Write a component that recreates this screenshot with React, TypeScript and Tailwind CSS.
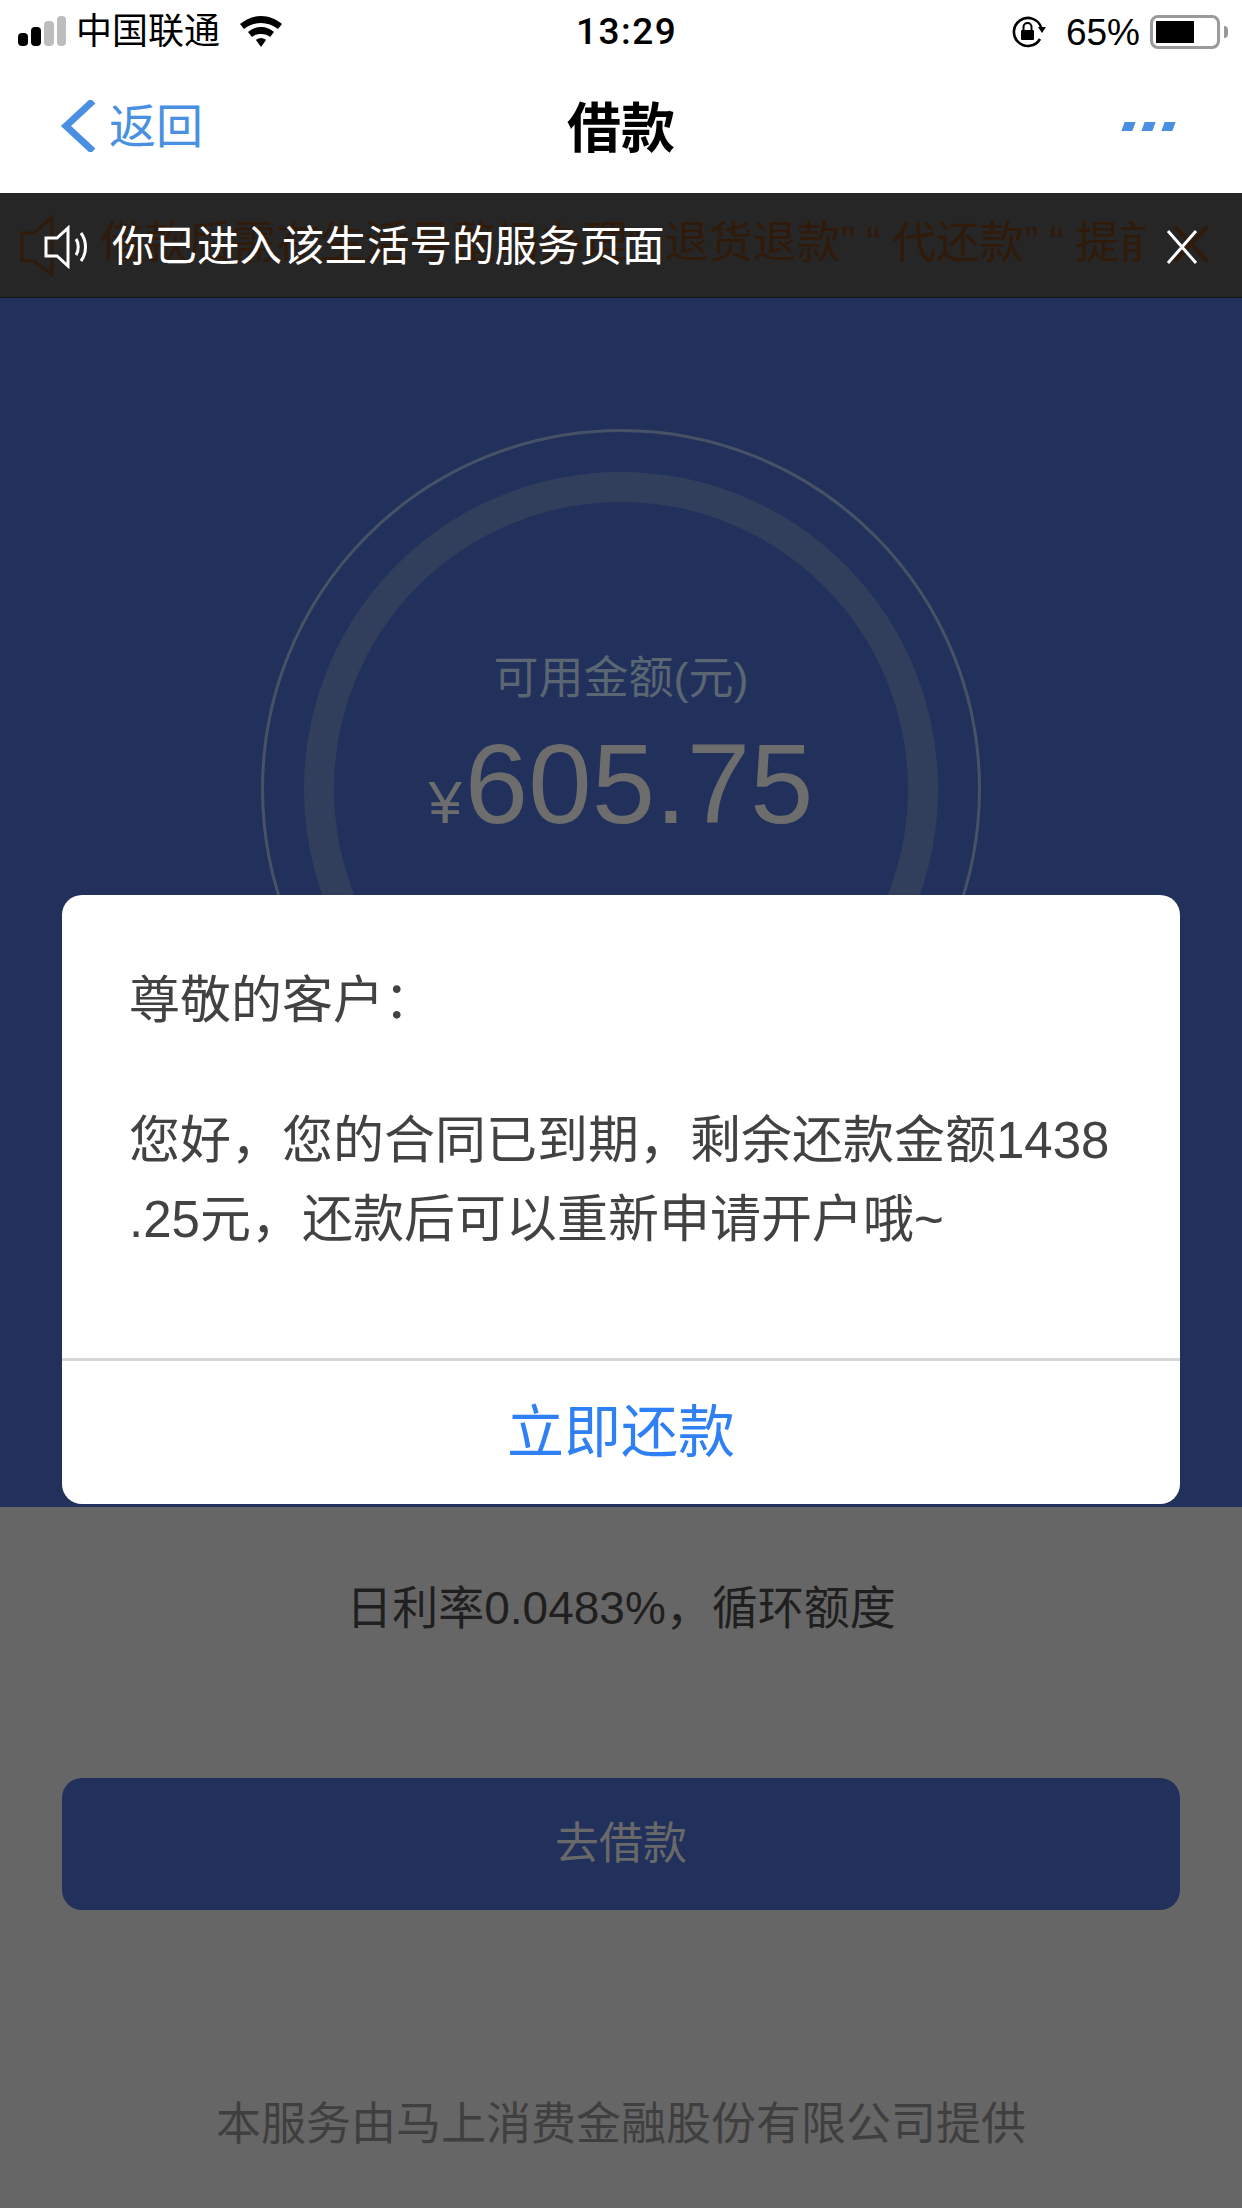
export default function App() {
  return (
    <div className="relative w-[1242px] h-[2208px] overflow-hidden bg-[#666666] font-['Liberation_Sans','Noto_Sans_CJK_SC',sans-serif]">
      <div className="bg-white h-[193px]">
        <div className="h-[64px] flex items-center justify-between pl-[18px] pr-[14px] text-black">
          <div className="flex items-center">
            <svg width="48" height="32" viewBox="0 0 48 32" fill="#000">
              <rect x="0" y="17" width="10" height="13" rx="4" />
              <rect x="13" y="11" width="10" height="19" rx="4" />
              <rect x="26" y="5" width="10" height="25" rx="4" fill="#bdbdbd" />
              <rect x="39" y="0" width="9" height="30" rx="4" fill="#bdbdbd" />
            </svg>
            <span className="ml-[10px] text-[36px] leading-none">中国联通</span>
            <svg className="ml-[20px]" width="42" height="32" viewBox="0 0 42 32" fill="#000">
              <path d="M21 0C13 0 6 3 0 8l4 5c5-4 11-6 17-6s12 2 17 6l4-5C36 3 29 0 21 0Z" />
              <path d="M21 11c-5 0-10 2-13 5l4 5c2-2 5-3 9-3s7 1 9 3l4-5c-3-3-8-5-13-5Z" />
              <path d="M21 22c-2 0-4 1-5 2l5 7 5-7c-1-1-3-2-5-2Z" />
            </svg>
          </div>
          <span className="absolute left-[576px] top-[11px] font-['Roboto',sans-serif] text-[37px] leading-[42px] font-medium tracking-[1.5px]">13:29</span>
          <div className="flex items-center">
            <svg width="34" height="32" viewBox="0 0 34 32" fill="none">
              <path d="M28 23A14 14 0 1 1 29 11" stroke="#000" strokeWidth="2.6" />
              <path d="M26 11h8l-4 6Z" fill="#000" />
              <rect x="9" y="14" width="13" height="10" rx="1" fill="#000" />
              <path d="M11.5 14v-3a4 4 0 0 1 8 0v3" stroke="#000" strokeWidth="2" />
            </svg>
            <span className="ml-[20px] text-[37px] leading-none">65%</span>
            <div className="ml-[10px] w-[70px] h-[34px] rounded-[8px] border-[3px] border-[#9a9a9a] p-[3px]">
              <div className="w-[38px] h-[22px] bg-black" />
            </div>
            <div className="ml-[4px] w-[4px] h-[12px] rounded-r-full bg-[#9a9a9a]" />
          </div>
        </div>
        <div className="h-[129px] relative flex items-center justify-center">
          <div className="absolute left-[60px] top-[36px] flex items-center">
            <svg width="36" height="52" viewBox="0 0 36 52" fill="none">
              <path d="M33 1 L6 26 L33 51" stroke="#4a90e2" strokeWidth="7" />
            </svg>
            <span className="ml-[13px] text-[47px] leading-none text-[#4a90e2]">返回</span>
          </div>
          <span className="text-[54px] leading-none font-semibold text-black">借款</span>
          <div className="absolute left-[1123px] top-[58px] flex gap-[9px]">
            <div className="w-[11px] h-[9px] bg-[#4a90e2] [transform:skewX(-20deg)]" />
            <div className="w-[11px] h-[9px] bg-[#4a90e2] [transform:skewX(-20deg)]" />
            <div className="w-[11px] h-[9px] bg-[#4a90e2] [transform:skewX(-20deg)]" />
          </div>
        </div>
      </div>

      <div className="relative h-[105px] bg-[#262626] border-b border-[#161616] flex items-center overflow-hidden">
        <div className="absolute left-[100px] top-[28px] w-[1045px] overflow-hidden">
          <span className="text-[44px] leading-none whitespace-nowrap text-[#301a0a]">借款后需在生活号整场办理<span className="tracking-[22px]">“</span>退货退款<span className="tracking-[11px]">”“</span>代还款<span className="tracking-[11px]">”“</span>提前还款”</span>
        </div>
        <svg className="absolute left-[20px] top-[22px]" width="42" height="62" viewBox="0 0 42 62" fill="none" stroke="#301a0a" strokeWidth="3">
          <path d="M32 2v58L14 46H2V18h12Z" />
        </svg>
        <svg className="absolute left-[1172px] top-[32px]" width="38" height="38" viewBox="0 0 38 38" stroke="#301a0a" strokeWidth="4">
          <path d="M3 2l32 34M35 2L3 36" />
        </svg>
        <svg className="relative ml-[44px] mt-[4px]" width="50" height="44" viewBox="0 0 50 44" fill="none" stroke="#fff" strokeWidth="3">
          <path d="M24 3v38L13 31H2V13h11Z" />
          <path d="M32 14c3 4 3 12 0 16" />
          <path d="M37 8c6 8 6 20 0 28" />
        </svg>
        <span className="relative ml-[18px] mt-[5px] text-[42.5px] leading-none text-white">你已进入该生活号的服务页面</span>
        <svg className="absolute left-[1166px] top-[36px]" width="32" height="36" viewBox="0 0 32 36" stroke="#fff" strokeWidth="3">
          <path d="M2 2l28 32M30 2L2 34" />
        </svg>
      </div>

      <div className="h-[1209px] bg-[#22315c] overflow-hidden pt-[131px]">
        <div className="mx-auto w-[720px] h-[720px] rounded-full border-[3px] border-[#485266] flex items-center justify-center">
          <div className="w-[634px] h-[634px] rounded-full border-[30px] border-[#323f5c] flex flex-col items-center">
            <span className="mt-[152px] text-[45px] leading-[50px] text-[#5a6672] whitespace-nowrap">可用金额(元)</span>
            <div className="mt-[23px] flex items-baseline text-[#6d6d6d] whitespace-nowrap">
              <span className="text-[60px] leading-none mr-[3px]">¥</span>
              <span className="text-[114px] leading-[114px]">605.75</span>
            </div>
          </div>
        </div>
      </div>

      <div className="flex flex-col items-center">
        <p className="mt-[76px] text-[46px] leading-[50px] text-[#1f1f1f]">日利率0.0483%，循环额度</p>
        <div className="mt-[145px] w-[1118px] h-[132px] rounded-[20px] bg-[#22315c] flex items-center justify-center text-[44px] text-[#696969]">去借款</div>
        <p className="mt-[190px] text-[45px] leading-[50px] text-[#3f3f3f]">本服务由马上消费金融股份有限公司提供</p>
      </div>

      <div className="absolute left-[62px] top-[895px] w-[1118px] h-[609px] rounded-[20px] bg-white flex flex-col">
        <div className="flex-1 pl-[67px] pt-[66px] text-[51px] leading-[79px] text-[#424242] whitespace-nowrap">
          <p>尊敬的客户：</p>
          <p className="mt-[61px]">您好，您的合同已到期，剩余还款金额1438<br />.25元，还款后可以重新申请开户哦~</p>
        </div>
        <div className="h-[3px] bg-[#d8d8d8]" />
        <div className="h-[143px] flex items-center justify-center text-[57px] text-[#2f7ff5]">立即还款</div>
      </div>
    </div>
  );
}
